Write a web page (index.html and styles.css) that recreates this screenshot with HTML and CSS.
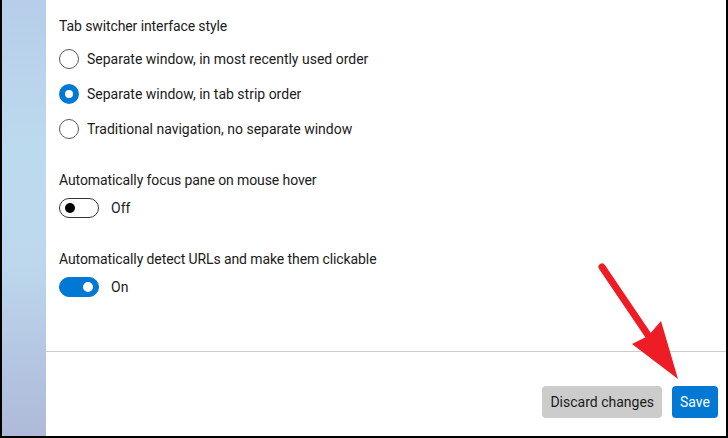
FILE: index.html
```html
<!DOCTYPE html>
<html lang="en">
<head>
    <meta charset="UTF-8">
    <meta name="viewport" content="width=device-width, initial-scale=1.0">
    <title>Interaction settings</title>
    <link rel="stylesheet" href="styles.css">
</head>
<body>
    <div class="frame">
        <aside class="rail"></aside>
        <main class="panel">
            <div class="settings">
                <!-- Tab switcher -->
                <section class="group">
                    <h2 class="group-title radio-title">Tab switcher interface style</h2>
                    <div class="radio-list">
                        <label class="radio-row"><span class="radio"></span>Separate window, in most recently used order</label>
                        <label class="radio-row"><span class="radio checked"></span>Separate window, in tab strip order</label>
                        <label class="radio-row"><span class="radio"></span>Traditional navigation, no separate window</label>
                    </div>
                </section>

                <section class="group">
                    <h2 class="group-title">Automatically focus pane on mouse hover</h2>
                    <div class="toggle-row"><span class="toggle"><span class="knob"></span></span>Off</div>
                </section>

                <section class="group">
                    <h2 class="group-title">Automatically detect URLs and make them clickable</h2>
                    <div class="toggle-row"><span class="toggle on"><span class="knob"></span></span>On</div>
                </section>
            </div>

            <footer class="actions">
                <button class="btn btn-secondary">Discard changes</button>
                <button class="btn btn-primary">Save</button>
            </footer>
        </main>

        <!-- red pointer towards Save -->
        <svg class="pointer" viewBox="0 0 728 438" width="728" height="438">
            <line x1="602" y1="267" x2="648" y2="335" stroke="#ee1d25" stroke-width="7" stroke-linecap="round"/>
            <polygon points="632,344 648,336 661,321 678,379" fill="#ee1d25"/>
        </svg>
    </div>
</body>
</html>
```

FILE: styles.css
```css
/* Basic reset */
* {
    margin: 0;
    padding: 0;
    box-sizing: border-box;
}

body {
    font-family: Roboto, "Noto Sans", sans-serif;
    font-size: 14px;
    color: #1b1b1b;
    background-color: #fff;
}

/* Window frame */
.frame {
    position: relative;
    display: flex;
    width: 728px;
    height: 438px;
    border: 2px solid #000;
    border-top: none;
}

.rail {
    width: 44px;
    flex-shrink: 0;
    background: linear-gradient(180deg, #b6cee9 0%, #bcdaee 35%, #bdd8ed 60%, #b5c8e3 80%, #aebad8 100%);
}

.panel {
    flex: 1;
    display: flex;
    flex-direction: column;
}

/* Settings list */
.settings {
    flex: 1;
    padding: 16px 13px 0;
}

.group {
    margin-bottom: 31px;
}

.group-title {
    font-size: 14px;
    font-weight: normal;
    line-height: 20px;
    letter-spacing: -0.1px;
    margin-bottom: 8px;
}

.radio-title {
    margin-bottom: 13px;
}

.radio-list {
    display: flex;
    flex-direction: column;
    gap: 15px;
}

.radio-row {
    display: flex;
    align-items: center;
    gap: 8px;
    line-height: 20px;
}

.radio {
    width: 20px;
    height: 20px;
    border: 1px solid #595959;
    border-radius: 50%;
    background-color: #fff;
    flex-shrink: 0;
}

.radio.checked {
    border: 6px solid #0078d4;
}

.toggle-row {
    display: flex;
    align-items: center;
    gap: 12px;
    line-height: 20px;
}

.toggle {
    display: flex;
    align-items: center;
    width: 40px;
    height: 20px;
    padding: 0 5px;
    border: 1px solid #333;
    border-radius: 10px;
}

.toggle .knob {
    width: 10px;
    height: 10px;
    border-radius: 50%;
    background-color: #000;
}

.toggle.on {
    justify-content: flex-end;
    background-color: #0078d4;
    border-color: #0078d4;
}

.toggle.on .knob {
    background-color: #fff;
}

/* Bottom action bar */
.actions {
    display: flex;
    justify-content: flex-end;
    gap: 10px;
    height: 85px;
    padding: 34px 8px 0 0;
    border-top: 1px solid #ccc;
}

.btn {
    height: 32px;
    padding: 0 8px;
    font-family: inherit;
    font-size: 14px;
    border: none;
    border-radius: 4px;
    cursor: pointer;
}

.btn-secondary {
    background-color: #ccc;
    color: #1b1b1b;
}

.btn-primary {
    background-color: #0078d4;
    color: #fff;
}

.pointer {
    position: absolute;
    top: 0;
    left: -2px;
    pointer-events: none;
}
```
